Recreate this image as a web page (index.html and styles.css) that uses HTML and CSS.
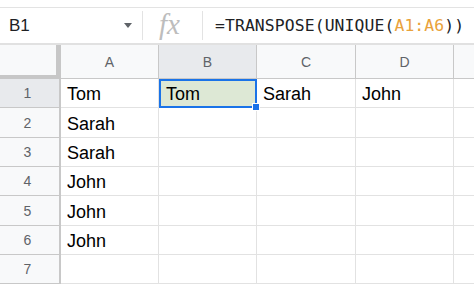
FILE: index.html
```html
<!DOCTYPE html>
<html lang="en">

    <head>
        <meta charset="UTF-8">
        <meta name="viewport" content="width=device-width, initial-scale=1.0">
        <title>TRANSPOSE UNIQUE</title>
        <link rel="stylesheet" href="styles.css">
    </head>

    <body>
        <div class="top-strip"></div>

        <div class="formula-bar">
            <div class="name-box">
                <span>B1</span>
                <span class="caret"></span>
            </div>
            <div class="fx">fx</div>
            <div class="formula">=TRANSPOSE(UNIQUE(<span class="ref">A1:A6</span>))</div>
        </div>

        <div class="sheet">
            <div class="corner"></div>
            <div class="col-head">A</div>
            <div class="col-head active">B</div>
            <div class="col-head">C</div>
            <div class="col-head">D</div>
            <div class="col-head last"></div>

            <div class="row-head active">1</div>
            <div class="cell">Tom</div>
            <div class="cell selected">Tom<span class="handle"></span></div>
            <div class="cell">Sarah</div>
            <div class="cell">John</div>
            <div class="cell last"></div>

            <div class="row-head">2</div>
            <div class="cell">Sarah</div>
            <div class="cell"></div>
            <div class="cell"></div>
            <div class="cell"></div>
            <div class="cell last"></div>

            <div class="row-head">3</div>
            <div class="cell">Sarah</div>
            <div class="cell"></div>
            <div class="cell"></div>
            <div class="cell"></div>
            <div class="cell last"></div>

            <div class="row-head">4</div>
            <div class="cell">John</div>
            <div class="cell"></div>
            <div class="cell"></div>
            <div class="cell"></div>
            <div class="cell last"></div>

            <div class="row-head">5</div>
            <div class="cell">John</div>
            <div class="cell"></div>
            <div class="cell"></div>
            <div class="cell"></div>
            <div class="cell last"></div>

            <div class="row-head">6</div>
            <div class="cell">John</div>
            <div class="cell"></div>
            <div class="cell"></div>
            <div class="cell"></div>
            <div class="cell last"></div>

            <div class="row-head">7</div>
            <div class="cell"></div>
            <div class="cell"></div>
            <div class="cell"></div>
            <div class="cell"></div>
            <div class="cell last"></div>
        </div>
    </body>

</html>
```

FILE: styles.css
```css
* {
    margin: 0;
    padding: 0;
    box-sizing: border-box;
}

body {
    width: 474px;
    height: 284px;
    overflow: hidden;
    background-color: #fff;
    font-family: "Liberation Sans", Arial, sans-serif;
}

.top-strip {
    height: 8px;
    border-bottom: 1px solid #e3e3e3;
}

/* formula bar */
.formula-bar {
    display: flex;
    align-items: center;
    height: 37px;
    border-bottom: 2px solid #e1e1e1;
}

.name-box {
    display: flex;
    align-items: center;
    justify-content: space-between;
    width: 143px;
    height: 29px;
    padding: 0 10px 0 9px;
    border-right: 1px solid #e3e3e3;
    font-size: 17px;
    color: #202124;
}

.caret {
    width: 0;
    height: 0;
    border-left: 4.5px solid transparent;
    border-right: 4.5px solid transparent;
    border-top: 5px solid #5f6368;
}

.fx {
    width: 60px;
    height: 29px;
    padding-left: 16px;
    border-right: 1px solid #e3e3e3;
    font-family: "Liberation Serif", serif;
    font-style: italic;
    font-size: 29px;
    line-height: 26px;
    color: #bdbdbd;
}

.formula {
    padding-left: 12px;
    font-family: "DejaVu Sans Mono", monospace;
    font-size: 16.4px;
    letter-spacing: 0.1px;
    color: #202124;
}

.formula .ref {
    color: #e9a23b;
}

/* grid */
.sheet {
    display: grid;
    grid-template-columns: 61px 98px 98px 99px 98px 1fr;
    grid-template-rows: 34px 29px 30px 29px 29px 30px 29px 29px;
}

.corner {
    background-color: #f8f9fa;
    border-right: 5px solid #c7c7c7;
    border-bottom: 4px solid #c7c7c7;
}

.col-head {
    display: flex;
    align-items: center;
    justify-content: center;
    padding-top: 1px;
    background-color: #f8f9fa;
    border-right: 1px solid #c8c8c8;
    border-bottom: 1px solid #c8c8c8;
    font-size: 14px;
    color: #5f6368;
}

.row-head {
    display: flex;
    align-items: center;
    justify-content: center;
    padding-right: 4px;
    background-color: #f8f9fa;
    border-right: 2px solid #c8c8c8;
    border-bottom: 1px solid #c8c8c8;
    font-size: 14px;
    color: #5f6368;
}

.col-head.active,
.row-head.active {
    background-color: #e8eaed;
}

.col-head.last {
    border-right: none;
}

.cell {
    position: relative;
    display: flex;
    align-items: flex-end;
    padding: 0 0 2px 6px;
    border-right: 1px solid #e2e2e2;
    border-bottom: 1px solid #e2e2e2;
    font-size: 18px;
    line-height: 22px;
    color: #000;
}

.cell.last {
    border-right: none;
}

.cell.selected {
    z-index: 1;
    padding: 0 0 1px 5px;
    background-color: #dde8d5;
    border: 2px solid #1a73e8;
}

.handle {
    position: absolute;
    right: -5px;
    bottom: -5px;
    width: 8px;
    height: 8px;
    background-color: #1a73e8;
    border: 1px solid #fff;
}
```
